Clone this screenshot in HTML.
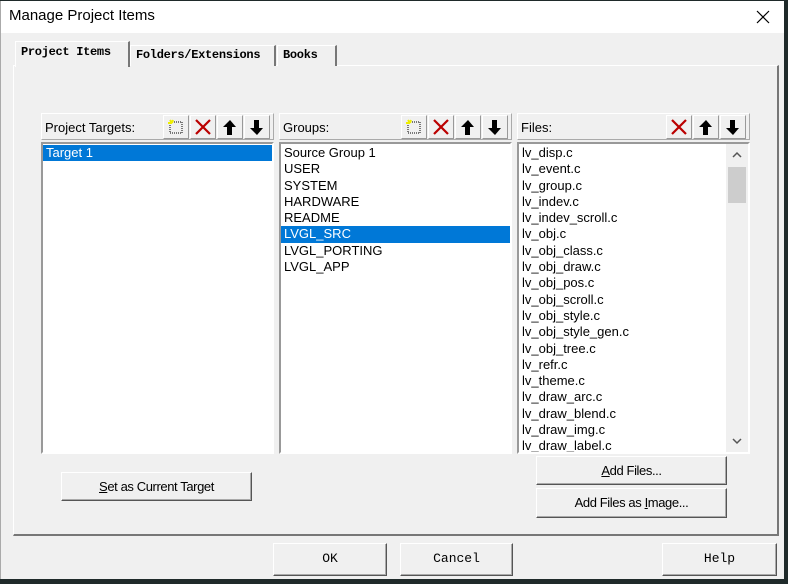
<!DOCTYPE html>
<html><head><style>
*{margin:0;padding:0;box-sizing:border-box}
body{width:788px;height:584px;background:#1f2a2a;position:relative;overflow:hidden;font-family:"Liberation Sans",sans-serif;font-size:13px;color:#000}
.win{position:absolute;left:0;top:1px;width:784px;height:578px;background:#f0f0f0;border-left:1px solid #aaa}
.title{position:absolute;left:0;top:0;width:783px;height:32px;background:#fff}
.title span{position:absolute;left:8px;top:6px;font-size:15px}
.abs{position:absolute}
.mono{font-family:"Liberation Mono",monospace;font-size:12px;font-weight:bold;letter-spacing:-0.3px}
.tab{position:absolute;background:#f0f0f0;border:1px solid #fff;border-right:2px solid #777;border-bottom:none;padding:3px 5px}
.panel{position:absolute;left:12px;top:64px;width:766px;height:471px;border:1px solid #fff;border-right:2px solid #777;border-bottom:2px solid #777}
.hdr{position:absolute;height:27px;border:1px solid #fff;border-right:1px solid #aaa;border-bottom:1px solid #aaa;background:#f0f0f0}
.hdr span{position:absolute;left:3px;top:6px}
.tb{position:absolute;top:1px;width:26px;height:24px;border:1px solid #fff;border-right:1px solid #999;border-bottom:1px solid #999}
.list{position:absolute;background:#fff;border:2px solid;border-color:#999 #fff #fff #999;overflow:hidden;line-height:16.3px;padding-top:1px}
.list div{padding-left:3px;height:16.3px}
.sel{background:#0078d7;color:#fff}
.btn{position:absolute;background:#f0f0f0;border:1px solid;border-color:#fff #555 #555 #fff;box-shadow:inset -1px -1px #aaa;text-align:center;font-size:13px;letter-spacing:-0.4px}
</style></head><body>
<div class="win">
<div class="title"><span>Manage Project Items</span>
<svg class="abs" style="left:755px;top:9px" width="14" height="14"><path d="M1 1L13 13M13 1L1 13" stroke="#000" stroke-width="1.2"/></svg></div>
<div class="panel"></div>
<div class="tab mono" style="left:14px;top:40px;width:115px;height:26px;">Project Items</div>
<div class="tab mono" style="left:129px;top:44px;width:146px;height:21px;padding-top:2px">Folders/Extensions</div>
<div class="tab mono" style="left:276px;top:44px;width:60px;height:21px;padding-top:2px">Books</div>

<!-- targets -->
<div class="hdr" style="left:40px;top:112px;width:233px"><span>Project Targets:</span>
<div class="tb" style="left:121px"><svg width="24" height="22"><rect x="6" y="6" width="12" height="11" fill="none" stroke="#000" stroke-dasharray="1 1"/><path d="M6 4l2 3M4 7h4M9 4l-1 3" stroke="#ee0" stroke-width="2"/></svg></div>
<div class="tb" style="left:148px"><svg width="24" height="22"><path d="M5 4L19 18M19 4L5 18" stroke="#b00" stroke-width="2.2"/></svg></div>
<div class="tb" style="left:175px"><svg width="24" height="22"><path d="M12 4L5 11H9V19H14V11H18Z" fill="#000"/></svg></div>
<div class="tb" style="left:202px"><svg width="24" height="22"><path d="M12 19L5 12H9V4H14V12H18Z" fill="#000"/></svg></div>
</div>
<div class="list" style="left:40px;top:141px;width:233px;height:312px"><div class="sel">Target 1</div></div>

<!-- groups -->
<div class="hdr" style="left:278px;top:112px;width:233px"><span>Groups:</span>
<div class="tb" style="left:121px"><svg width="24" height="22"><rect x="6" y="6" width="12" height="11" fill="none" stroke="#000" stroke-dasharray="1 1"/><path d="M6 4l2 3M4 7h4M9 4l-1 3" stroke="#ee0" stroke-width="2"/></svg></div>
<div class="tb" style="left:148px"><svg width="24" height="22"><path d="M5 4L19 18M19 4L5 18" stroke="#b00" stroke-width="2.2"/></svg></div>
<div class="tb" style="left:175px"><svg width="24" height="22"><path d="M12 4L5 11H9V19H14V11H18Z" fill="#000"/></svg></div>
<div class="tb" style="left:202px"><svg width="24" height="22"><path d="M12 19L5 12H9V4H14V12H18Z" fill="#000"/></svg></div>
</div>
<div class="list" style="left:278px;top:141px;width:233px;height:312px">
<div>Source Group 1</div><div>USER</div><div>SYSTEM</div><div>HARDWARE</div><div>README</div><div class="sel">LVGL_SRC</div><div>LVGL_PORTING</div><div>LVGL_APP</div></div>

<!-- files -->
<div class="hdr" style="left:516px;top:112px;width:233px"><span>Files:</span>
<div class="tb" style="left:148px"><svg width="24" height="22"><path d="M5 4L19 18M19 4L5 18" stroke="#b00" stroke-width="2.2"/></svg></div>
<div class="tb" style="left:175px"><svg width="24" height="22"><path d="M12 4L5 11H9V19H14V11H18Z" fill="#000"/></svg></div>
<div class="tb" style="left:202px"><svg width="24" height="22"><path d="M12 19L5 12H9V4H14V12H18Z" fill="#000"/></svg></div>
</div>
<div class="list" style="left:516px;top:141px;width:233px;height:312px">
<div>lv_disp.c</div><div>lv_event.c</div><div>lv_group.c</div><div>lv_indev.c</div><div>lv_indev_scroll.c</div><div>lv_obj.c</div><div>lv_obj_class.c</div><div>lv_obj_draw.c</div><div>lv_obj_pos.c</div><div>lv_obj_scroll.c</div><div>lv_obj_style.c</div><div>lv_obj_style_gen.c</div><div>lv_obj_tree.c</div><div>lv_refr.c</div><div>lv_theme.c</div><div>lv_draw_arc.c</div><div>lv_draw_blend.c</div><div>lv_draw_img.c</div><div>lv_draw_label.c</div>
<div class="abs" style="left:207px;top:0;width:22px;height:308px;background:#f0f0f0"></div>
<div class="abs" style="left:209px;top:23px;width:18px;height:36px;background:#cdcdcd"></div>
<svg class="abs" style="left:212px;top:7px" width="12" height="8"><path d="M2 6L6 2L10 6" stroke="#555" stroke-width="1.5" fill="none"/></svg>
<svg class="abs" style="left:212px;top:293px" width="12" height="8"><path d="M2 2L6 6L10 2" stroke="#555" stroke-width="1.5" fill="none"/></svg>
</div>

<div class="btn" style="left:60px;top:471px;width:191px;height:29px;line-height:27px"><u>S</u>et as Current Target</div>
<div class="btn" style="left:535px;top:455px;width:191px;height:29px;line-height:27px"><u>A</u>dd Files...</div>
<div class="btn" style="left:535px;top:487px;width:191px;height:30px;line-height:28px">Add Files as <u>I</u>mage...</div>
<div class="btn mono" style="left:272px;top:542px;width:114px;height:33px;line-height:30px;font-weight:normal;font-size:13px;letter-spacing:0">OK</div>
<div class="btn mono" style="left:399px;top:542px;width:113px;height:33px;line-height:30px;font-weight:normal;font-size:13px;letter-spacing:0">Cancel</div>
<div class="btn mono" style="left:661px;top:542px;width:115px;height:33px;line-height:30px;font-weight:normal;font-size:13px;letter-spacing:0">Help</div>
</div>
</body></html>
